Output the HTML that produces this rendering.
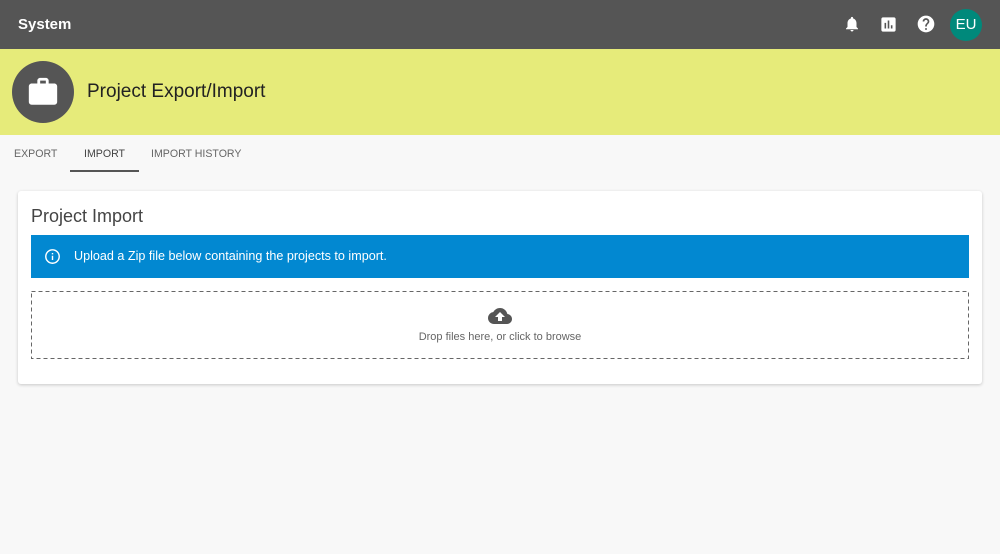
<!DOCTYPE html>
<html><head><meta charset="utf-8"><style>
*{margin:0;padding:0;box-sizing:border-box}
body{width:1000px;height:554px;background:#f8f8f8;font-family:"Liberation Sans",sans-serif;position:relative;overflow:hidden}
.top{position:absolute;left:0;top:0;width:1000px;height:49px;background:#555}
.top .t{position:absolute;left:18px;top:16px;color:#fff;font-weight:bold;font-size:15px}
.ban{position:absolute;left:0;top:49px;width:1000px;height:86px;background:#e6eb7a}
.circ{position:absolute;left:12px;top:12px;width:62px;height:62px;border-radius:50%;background:#555}
.ban .h{position:absolute;left:87px;top:32px;font-size:19px;color:#222}
.tab{position:absolute;top:148px;font-size:10.6px;color:#666}
.card{position:absolute;left:18px;top:191px;width:964px;height:193px;background:#fff;border-radius:3px;box-shadow:0 1px 3px rgba(0,0,0,.2)}
.card .h{position:absolute;left:13px;top:15px;font-size:18px;color:#444}
.info{position:absolute;left:13px;top:44px;width:938px;height:43px;background:#0288d1;color:#fff;font-size:12.6px}
.drop{position:absolute;left:13px;top:100px;width:938px;height:68px}
</style></head><body>
<div class="top"><div class="t">System</div>
<svg style="position:absolute;left:843px;top:15px" width="18" height="18" viewBox="0 0 24 24"><path fill="#fff" d="M12 22c1.1 0 2-.9 2-2h-4c0 1.1.9 2 2 2zm6-6v-5c0-3.07-1.64-5.640-4.5-6.32V4a1.5 1.5 0 0 0-3 0v.68C7.63 5.36 6 7.92 6 11v5l-2 2v1h16v-1l-2-2z"/></svg>
<svg style="position:absolute;left:879px;top:15px" width="19" height="19" viewBox="0 0 24 24"><path fill="#fff" d="M19 3H5c-1.1 0-2 .9-2 2v14c0 1.1.9 2 2 2h14c1.1 0 2-.9 2-2V5c0-1.1-.9-2-2-2zM9 17H7v-7h2v7zm4 0h-2V7h2v10zm4 0h-2v-4h2v4z"/></svg>
<svg style="position:absolute;left:916px;top:14px" width="20" height="20" viewBox="0 0 24 24"><path fill="#fff" d="M12 2C6.48 2 2 6.48 2 12s4.48 10 10 10 10-4.48 10-10S17.520 2 12 2zm1 17h-2v-2h2v2zm2.07-7.75-.9.92C13.45 12.9 13 13.5 13 15h-2v-.5c0-1.1.45-2.1 1.17-2.83l1.24-1.26c.37-.36.59-.86.59-1.41 0-1.1-.9-2-2-2s-2 .9-2 2H8c0-2.21 1.79-4 4-4s4 1.79 4 4c0 .88-.36 1.68-.93 2.25z"/></svg>
<div style="position:absolute;left:950px;top:9px;width:32px;height:32px;border-radius:50%;background:#00897b;color:#fff;font-size:15px;text-align:center;line-height:32px">EU</div>
</div>
<div class="ban"><div class="circ"><svg style="position:absolute;left:14px;top:14px" width="34" height="34" viewBox="0 0 24 24"><path fill="#fff" d="M20 6h-4V4c0-1.1-.9-2-2-2h-4c-1.1 0-2 .9-2 2v2H4c-1.1 0-2 .9-2 2v11c0 1.1.9 2 2 2h16c1.1 0 2-.9 2-2V8c0-1.1-.9-2-2-2zm-6 0h-4V4h4v2z"/></svg></div><div class="h">Project Export/Import</div></div>
<div class="tab" style="left:14px">EXPORT</div>
<div class="tab" style="left:84px;color:#444">IMPORT</div>
<div style="position:absolute;left:70px;top:170px;width:69px;height:2px;background:#555"></div>
<div class="tab" style="left:151px">IMPORT HISTORY</div>
<div class="card"><div class="h">Project Import</div>
<div class="info"><svg style="position:absolute;left:13px;top:13px" width="17" height="17" viewBox="0 0 24 24"><circle cx="12" cy="12" r="9.5" fill="none" stroke="#fff" stroke-width="2"/><path fill="#fff" d="M11 11h2v6h-2zM11 7h2v2h-2z"/></svg><span style="position:absolute;left:43px;top:14px">Upload a Zip file below containing the projects to import.</span></div>
<div class="drop"><svg style="position:absolute;left:0;top:0" width="938" height="68"><rect x="0.5" y="0.5" width="937" height="67" fill="none" stroke="#666" stroke-dasharray="4 3"/></svg><svg style="position:absolute;left:455px;top:13px" width="28" height="24" viewBox="0 0 24 24"><path fill="#555" d="M19.35 10.04A7.49 7.49 0 0 0 12 4C9.11 4 6.6 5.64 5.35 8.04A5.994 5.994 0 0 0 0 14c0 3.31 2.69 6 6 6h13c2.76 0 5-2.24 5-5 0-2.64-2.05-4.78-4.65-4.96zM14 13v4h-4v-4H7l5-5 5 5h-3z"/></svg><div style="position:absolute;left:0;width:100%;top:40px;text-align:center;font-size:11px;color:#666">Drop files here, or click to browse</div></div>
</div>
</body></html>
